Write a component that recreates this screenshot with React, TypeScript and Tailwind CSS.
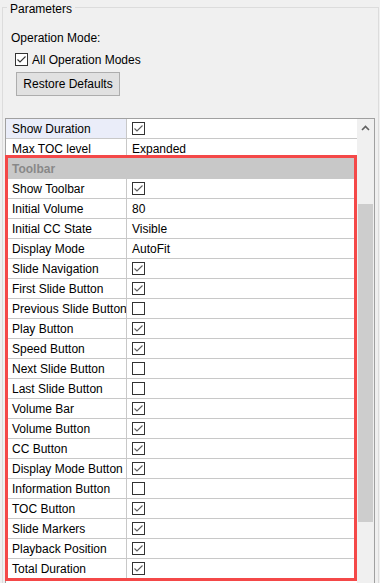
import React from 'react'

type Row = { label: string; value?: string; checked?: boolean }

const topRows: Row[] = [
  { label: 'Show Duration', checked: true },
  { label: 'Max TOC level', value: 'Expanded' },
]

const toolbarRows: Row[] = [
  { label: 'Show Toolbar', checked: true },
  { label: 'Initial Volume', value: '80' },
  { label: 'Initial CC State', value: 'Visible' },
  { label: 'Display Mode', value: 'AutoFit' },
  { label: 'Slide Navigation', checked: true },
  { label: 'First Slide Button', checked: true },
  { label: 'Previous Slide Button', checked: false },
  { label: 'Play Button', checked: true },
  { label: 'Speed Button', checked: true },
  { label: 'Next Slide Button', checked: false },
  { label: 'Last Slide Button', checked: false },
  { label: 'Volume Bar', checked: true },
  { label: 'Volume Button', checked: true },
  { label: 'CC Button', checked: true },
  { label: 'Display Mode Button', checked: true },
  { label: 'Information Button', checked: false },
  { label: 'TOC Button', checked: true },
  { label: 'Slide Markers', checked: true },
  { label: 'Playback Position', checked: true },
  { label: 'Total Duration', checked: true },
]

function CheckBox({ checked, dark }: { checked: boolean; dark?: boolean }) {
  return (
    <span className="w-[13px] h-[13px] border border-[#333333] bg-white flex items-center justify-center shrink-0">
      {checked && (
        <svg width="11" height="11" viewBox="0 0 11 11">
          <path d="M1.5 5.5 L4 8 L9.5 2.5" fill="none" stroke={dark ? '#333333' : '#5c5c5c'} strokeWidth="1.1" />
        </svg>
      )}
    </span>
  )
}

function GridRow({ row, selected }: { row: Row; selected?: boolean }) {
  return (
    <div className="flex h-[20px] border-b border-[#c8c8c8]">
      <div
        className={`w-[121px] pl-[6px] flex items-center border-r border-[#c8c8c8] whitespace-nowrap overflow-hidden ${
          selected ? 'bg-[#eaedf9]' : 'bg-white'
        }`}
      >
        {row.label}
      </div>
      <div className="flex-1 bg-white pl-[5px] flex items-center">
        {row.value !== undefined ? row.value : <CheckBox checked={!!row.checked} />}
      </div>
    </div>
  )
}

export default function App() {
  return (
    <div
      className="w-[380px] h-[583px] overflow-hidden bg-[#f0f0f0] text-[12px] text-black relative"
      style={{ fontFamily: '"Liberation Sans", Arial, sans-serif' }}
    >
      {/* group box */}
      <div className="absolute left-[2px] top-[7px] right-[1px] h-[600px] border border-[#dcdcdc]" />
      <div className="relative">
        <div className="ml-[7px] px-[3px] inline-block bg-[#f0f0f0] leading-[14px]">Parameters</div>

        <div className="pl-[11px] pt-[13px] leading-[14px]">Operation Mode:</div>
        <div className="flex items-center gap-[4px] pl-[15px] mt-[8px] h-[13px]">
          <CheckBox checked dark />
          <span>All Operation Modes</span>
        </div>
        <div className="pl-[16px] mt-[6px]">
          <button className="w-[104px] h-[24px] bg-[#e1e1e1] border border-[#adadad] flex items-center justify-center">
            Restore Defaults
          </button>
        </div>

        {/* property grid */}
        <div className="ml-[5px] mt-[22px] w-[370px] h-[500px] border border-[#a0a0a0] bg-white flex">
          <div className="flex-1">
            {topRows.map((r, i) => (
              <GridRow key={r.label} row={r} selected={i === 0} />
            ))}
            <div className="h-[20px] bg-[#c8c8c8] pl-[6px] flex items-center font-bold text-[#888888] border-b border-[#c8c8c8]">
              Toolbar
            </div>
            {toolbarRows.map((r) => (
              <GridRow key={r.label} row={r} />
            ))}
          </div>
          <div className="w-[17px] bg-[#f0f0f0] flex flex-col items-center">
            <svg width="9" height="6" viewBox="0 0 9 6" className="mt-[6px]">
              <path d="M1 5 L4.5 1.5 L8 5" fill="none" stroke="#606060" strokeWidth="1.6" />
            </svg>
            <div className="mt-[73px] w-[15px] h-[318px] bg-[#cdcdcd]" />
          </div>
        </div>

        {/* annotation highlight */}
        <div className="absolute left-[5px] top-[155px] w-[352px] h-[426px] border-[3px] border-[#f44848]" />
      </div>
    </div>
  )
}
